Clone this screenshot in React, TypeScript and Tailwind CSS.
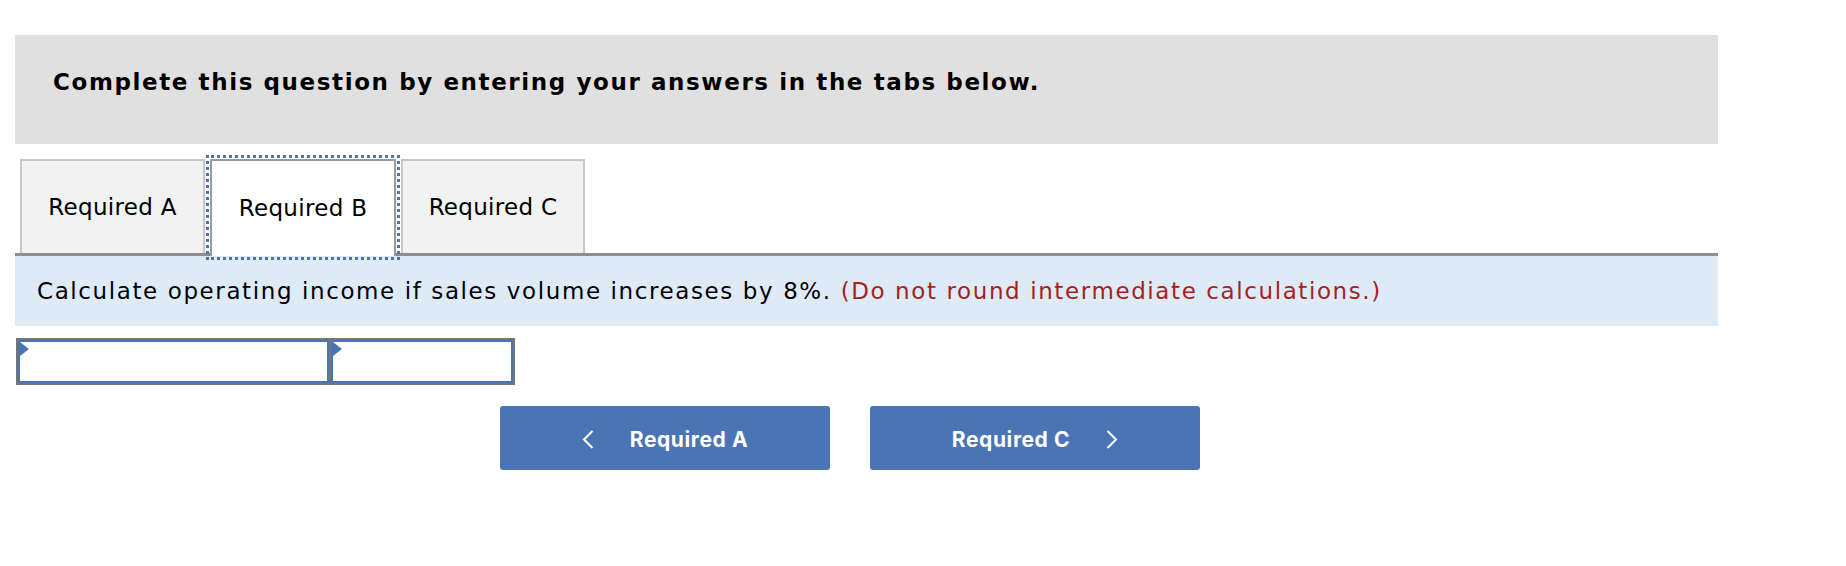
import React from "react";

function Chevron({ dir }: { dir: "left" | "right" }) {
  return (
    <svg width="12" height="19" viewBox="0 0 12 19" fill="none" stroke="white" strokeWidth="2">
      {dir === "left" ? <polyline points="10.5,1 2,9.5 10.5,18" /> : <polyline points="1.5,1 10,9.5 1.5,18" />}
    </svg>
  );
}

function Cell({ className }: { className: string }) {
  return (
    <div className={`relative h-full border-2 border-[#4a74b4] bg-white ${className}`}>
      <div className="absolute left-0 top-0 w-0 h-0 border-y-[7px] border-y-transparent border-l-[9px] border-l-[#4a74b4]" />
    </div>
  );
}

export default function App() {
  return (
    <div className="w-[1846px] h-[566px] bg-white pt-[35px] pl-[15px] font-['DejaVu_Sans',sans-serif] text-black">
      <div className="w-[1703px]">
        {/* Header */}
        <div className="h-[109px] bg-[#e0e0e0] pl-[38px] pt-[34px]">
          <p className="text-[23px] leading-[27px] font-bold tracking-[1.6px]">
            Complete this question by entering your answers in the tabs below.
          </p>
        </div>

        {/* Tabs */}
        <div className="mt-[15px] flex items-end pl-[5px] border-b-[3px] border-[#8e8e8e] h-[97px] text-[23px] tracking-[0.3px]">
          <div className="w-[185px] h-[94px] bg-[#f2f2f2] border-2 border-b-0 border-[#c8c8c8] flex items-center justify-center">
            Required A
          </div>
          <div className="relative z-10 ml-[5px] w-[186px] h-[97px] mb-[-3px] bg-white border-2 border-b-0 border-[#9a9a9a] outline-[3px] outline-offset-1 outline-dotted outline-[#4a74b4] flex items-center justify-center">
            Required B
          </div>
          <div className="ml-[5px] w-[184px] h-[94px] bg-[#f2f2f2] border-2 border-b-0 border-[#c8c8c8] flex items-center justify-center">
            Required C
          </div>
        </div>

        {/* Instruction */}
        <div className="h-[70px] bg-[#dfeaf7] pl-[22px] flex items-center text-[23px] tracking-[1.6px]">
          <p>
            Calculate operating income if sales volume increases by 8%.{" "}
            <span className="text-[#a51f1f]">(Do not round intermediate calculations.)</span>
          </p>
        </div>

        {/* Input row */}
        <div className="mt-[12px] ml-px w-[499px] h-[47px] border-2 border-[#747474] flex bg-[#747474] gap-[2px]">
          <Cell className="w-[311px]" />
          <Cell className="flex-1" />
        </div>

        {/* Nav buttons */}
        <div className="mt-[21px] ml-[485px] flex gap-[40px] font-['Inter',sans-serif]">
          <button className="w-[330px] h-[64px] pt-[3px] rounded-[3px] bg-[#4a74b4] text-white text-[21px] font-bold tracking-[0.6px] flex items-center justify-center gap-[36px]">
            <Chevron dir="left" />
            <span>Required A</span>
          </button>
          <button className="w-[330px] h-[64px] pt-[3px] rounded-[3px] bg-[#4a74b4] text-white text-[21px] font-bold tracking-[0.6px] flex items-center justify-center gap-[36px]">
            <span>Required C</span>
            <Chevron dir="right" />
          </button>
        </div>
      </div>
    </div>
  );
}
